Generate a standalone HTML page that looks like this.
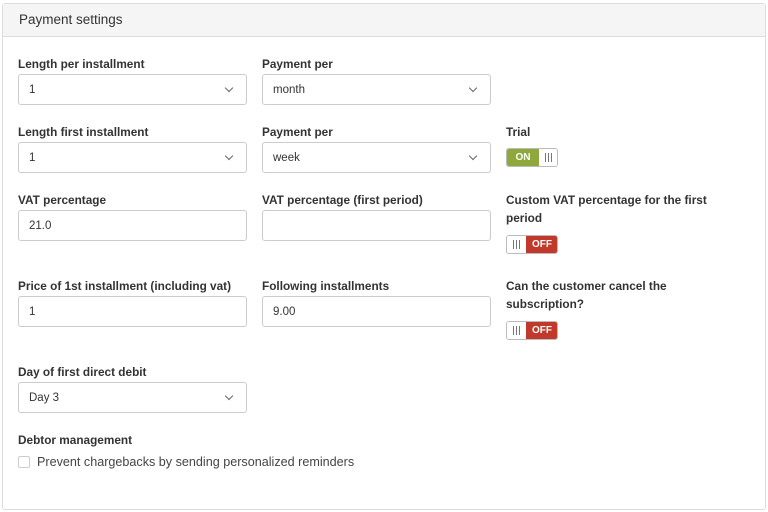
<!DOCTYPE html>
<html><head><style>
*{box-sizing:border-box;margin:0;padding:0}
body{width:768px;height:512px;background:#fff;font-family:"Liberation Sans",sans-serif;color:#333;position:relative;overflow:hidden}
.panel{position:absolute;left:2px;top:3px;width:764px;height:507px;border:1px solid #ddd;border-radius:3px}
.hd{height:33px;background:#f5f5f5;border-bottom:1px solid #ddd;font-size:13.5px;padding:8px 0 0 16px;color:#333}
.l{position:absolute;font-size:11.8px;font-weight:bold;color:#333;line-height:18px}
.i{position:absolute;height:31px;border:1px solid #ccc;border-radius:3px;font-size:11.5px;padding:9px 10px;color:#333;width:229px}
.i.s::after{content:"";position:absolute;right:14px;top:10px;width:5px;height:5px;border-right:1px solid #666;border-bottom:1px solid #666;transform:rotate(45deg)}
.t{position:absolute;width:52px;height:19px;border:1px solid #bbb;border-radius:3px;overflow:hidden;font-size:10px;font-weight:bold;color:#fff}
.t span{position:absolute;top:0;height:17px;line-height:17px;text-align:center}
.g{position:absolute;top:4px;width:7px;height:9px;border-left:1px solid #777;border-right:1px solid #777}
.g::after{content:"";position:absolute;left:2px;top:0;height:9px;border-left:1px solid #777}
</style></head><body>
<div class="panel"><div class="hd">Payment settings</div></div>

<div class="l" style="left:18px;top:55px">Length per installment</div>
<div class="i s" style="left:18px;top:74px">1</div>
<div class="l" style="left:262px;top:55px">Payment per</div>
<div class="i s" style="left:262px;top:74px">month</div>

<div class="l" style="left:18px;top:123px">Length first installment</div>
<div class="i s" style="left:18px;top:142px">1</div>
<div class="l" style="left:262px;top:123px">Payment per</div>
<div class="i s" style="left:262px;top:142px">week</div>
<div class="l" style="left:506px;top:123px">Trial</div>
<div class="t" style="left:506px;top:148px"><span style="left:0;width:32px;background:#8ea83c">ON</span><span style="left:32px;width:19px;background:#fff"></span><div class="g" style="left:38px"></div></div>

<div class="l" style="left:18px;top:191px">VAT percentage</div>
<div class="i" style="left:18px;top:210px">21.0</div>
<div class="l" style="left:262px;top:191px">VAT percentage (first period)</div>
<div class="i" style="left:262px;top:210px"></div>
<div class="l" style="left:506px;top:191px;width:230px">Custom VAT percentage for the first period</div>
<div class="t" style="left:506px;top:235px"><span style="left:0;width:19px;background:#fff"></span><div class="g" style="left:6px"></div><span style="left:19px;width:32px;background:#c0392b">OFF</span></div>

<div class="l" style="left:18px;top:277px">Price of 1st installment (including vat)</div>
<div class="i" style="left:18px;top:296px">1</div>
<div class="l" style="left:262px;top:277px">Following installments</div>
<div class="i" style="left:262px;top:296px">9.00</div>
<div class="l" style="left:506px;top:277px;width:230px">Can the customer cancel the subscription?</div>
<div class="t" style="left:506px;top:321px"><span style="left:0;width:19px;background:#fff"></span><div class="g" style="left:6px"></div><span style="left:19px;width:32px;background:#c0392b">OFF</span></div>

<div class="l" style="left:18px;top:363px">Day of first direct debit</div>
<div class="i s" style="left:18px;top:382px">Day 3</div>

<div class="l" style="left:18px;top:431px">Debtor management</div>
<div style="position:absolute;left:18px;top:456px;width:12px;height:12px;border:1px solid #ccc;border-radius:2px"></div>
<div style="position:absolute;left:37px;top:455px;font-size:12.6px;color:#444">Prevent chargebacks by sending personalized reminders</div>
</body></html>
